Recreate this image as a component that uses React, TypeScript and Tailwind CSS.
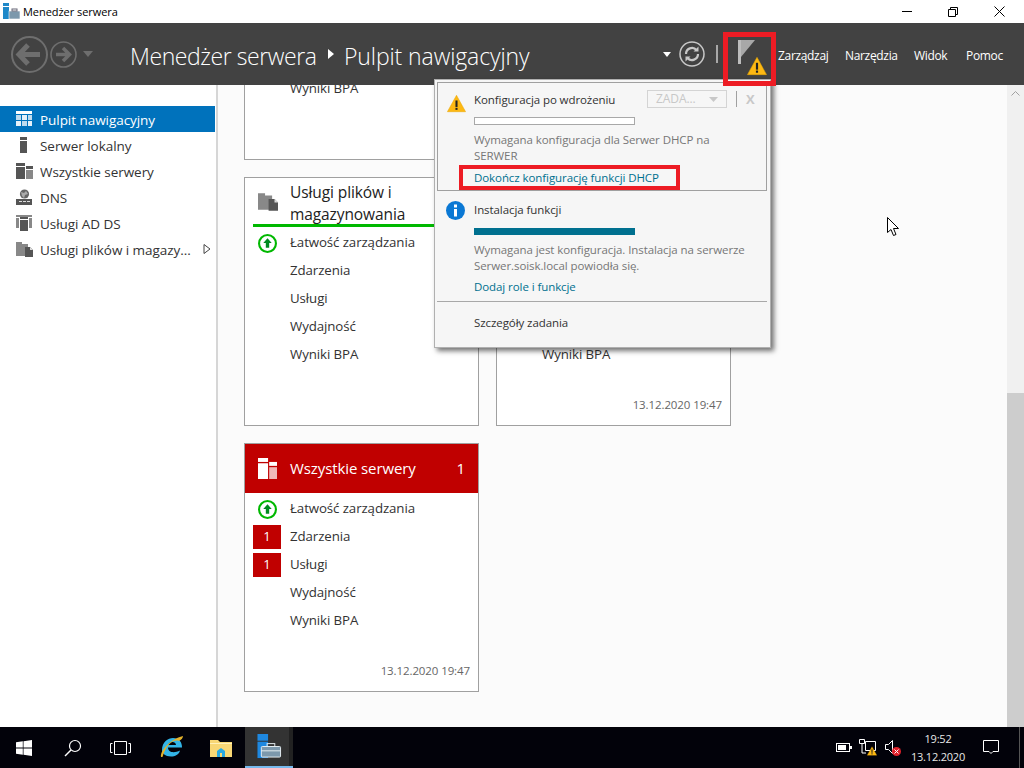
import React from "react";

const font = { fontFamily: '"Open Sans", "Noto Sans", sans-serif' };

function DashIcon({ c = "#fff" }: { c?: string }) {
  return (
    <svg width="17" height="16" viewBox="0 0 17 16">
      <rect x="0" y="0" width="16" height="3" fill={c} />
      <rect x="0" y="4" width="5" height="5" fill={c} opacity=".75" /><rect x="6" y="4" width="5" height="5" fill={c} opacity=".9" /><rect x="12" y="4" width="4" height="5" fill={c} opacity=".75" />
      <rect x="0" y="10" width="5" height="5" fill={c} opacity=".9" /><rect x="6" y="10" width="5" height="5" fill={c} opacity=".75" /><rect x="12" y="10" width="4" height="5" fill={c} opacity=".9" />
    </svg>
  );
}
function LocalIcon() {
  return (
    <svg width="17" height="17" viewBox="0 0 17 17">
      <rect x="4" y="0" width="7" height="3" fill="#555" /><rect x="4" y="4" width="7" height="12" fill="#555" />
    </svg>
  );
}
function AllIcon({ a = "#555", b = "#888", w = 17, h = 16 }: { a?: string; b?: string; w?: number; h?: number }) {
  return (
    <svg width={w} height={h} viewBox="0 0 17 16" preserveAspectRatio="none">
      <rect x="0" y="0" width="9" height="3" fill={a} /><rect x="0" y="4" width="9" height="12" fill={a} />
      <rect x="10" y="3" width="7" height="3" fill={a} /><rect x="10" y="7" width="7" height="9" fill={b} />
    </svg>
  );
}
function DnsIcon() {
  return (
    <svg width="17" height="16" viewBox="0 0 17 16">
      <circle cx="8.5" cy="5" r="4.6" fill="#666" /><path d="M5 3l3 1 2-2 2 3-3 1-1 3-2-2z" fill="#aaa" />
      <rect x="0" y="10" width="16" height="6" fill="#555" /><rect x="3" y="12" width="3" height="1" fill="#ddd" /><rect x="7" y="12" width="3" height="1" fill="#ddd" /><rect x="11" y="12" width="3" height="1" fill="#ddd" />
    </svg>
  );
}
function AdIcon() {
  return (
    <svg width="17" height="17" viewBox="0 0 17 17">
      <rect x="0" y="0" width="16" height="2" fill="#888" /><rect x="0" y="3" width="3" height="10" fill="#888" /><rect x="13" y="3" width="3" height="10" fill="#888" />
      <rect x="4" y="2" width="8" height="2" fill="#555" /><rect x="4" y="5" width="8" height="11" fill="#555" />
    </svg>
  );
}
function FilesIcon({ big }: { big?: boolean }) {
  return (
    <svg width={big ? 20 : 17} height={big ? 20 : 17} viewBox="0 0 17 17">
      <path d="M0 1h6v2h6v3h-2v9H0z" fill="#888" /><path d="M9 6h5l3 3v7H9z" fill="#555" /><path d="M14 6l3 3h-3z" fill="#ddd" />
    </svg>
  );
}
function GreenUp() {
  return (
    <svg width="19" height="19" viewBox="0 0 18 18">
      <circle cx="9" cy="9" r="8" fill="#fff" stroke="#00b800" strokeWidth="2" />
      <path d="M9 4l4 4.5h-2.4V13H7.4V8.5H5z" fill="#008a20" />
    </svg>
  );
}
function Warn({ size = 22 }: { size?: number }) {
  return (
    <svg width={size} height={size} viewBox="0 0 22 22">
      <path d="M11 1.5L21.5 20.5H.5z" fill="#fdb813" stroke="#e9a800" strokeWidth=".6" />
      <rect x="9.8" y="7.5" width="2.4" height="7.5" fill="#222" /><rect x="9.8" y="16" width="2.4" height="2.4" fill="#222" />
    </svg>
  );
}

function SideItem({ icon, label, active, arrow }: { icon: React.ReactNode; label: string; active?: boolean; arrow?: boolean }) {
  return (
    <div className={`flex h-[26px] items-center pl-4 text-[13.5px] tracking-[-0.05px] ${active ? "bg-[#0072bc] text-white" : "text-[#333333]"}`}>
      <span className="flex w-6 shrink-0 items-center">{icon}</span>
      <span className="flex-1 truncate pt-[3px]">{label}</span>
      {arrow && (
        <svg width="8" height="10" viewBox="0 0 8 10" className="mr-[4px]"><path d="M1 .5L7 5 1 9.500z" fill="#fff" stroke="#444" /></svg>
      )}
    </div>
  );
}

function Row({ label, badge, up }: { label: string; badge?: string; up?: boolean }) {
  return (
    <div className="flex h-[28px] items-center text-[13.3px] tracking-[-0.1px] text-[#333333]">
      <span className="ml-[8px] flex h-6 w-[28px] shrink-0 items-center justify-center">
        {up && <GreenUp />}
        {badge && <span className="flex h-6 w-[28px] items-center justify-center bg-[#c00000] text-[13px] text-white">{badge}</span>}
      </span>
      <span className="ml-[9px]">{label}</span>
    </div>
  );
}

function Rows({ first = false }: { first?: boolean }) {
  return (
    <>
      <Row label="Łatwość zarządzania" up />
      <Row label="Zdarzenia" badge={first ? "1" : undefined} />
      <Row label="Usługi" badge={first ? "1" : undefined} />
      <Row label="Wydajność" />
      <Row label="Wyniki BPA" />
    </>
  );
}

function Card({ children, date }: { children?: React.ReactNode; date?: boolean }) {
  return (
    <div className="relative flex h-[249px] flex-col border border-[#a0a0a0] bg-white">
      {children}
      {date && <div className="mt-auto pb-[12px] pr-[8px] text-right text-[11.5px] tracking-[-0.1px] text-[#666666]">13.12.2020 19:47</div>}
    </div>
  );
}

export default function App() {
  return (
    <div className="relative flex h-[768px] w-[1024px] flex-col overflow-hidden bg-white" style={font}>
      {/* title bar */}
      <div className="flex h-[23px] shrink-0 items-center bg-white">
        <svg width="17" height="17" viewBox="0 0 17 17" className="ml-[3px]">
          <rect x="0" y="0" width="6" height="3" fill="#1e88c8" /><rect x="0" y="4" width="6" height="12" fill="#1e88c8" />
          <rect x="6" y="8" width="11" height="8" fill="#7c98ac" stroke="#fff" strokeWidth=".6" /><rect x="9" y="6" width="5" height="2" fill="none" stroke="#667" />
        </svg>
        <span className="ml-[3px] mt-[2px] text-[11px] tracking-[-0.05px] text-black">Menedżer serwera</span>
        <div className="ml-auto mr-[2px] flex">
          <div className="flex h-[23px] w-[46px] items-center justify-center"><div className="h-px w-[10px] bg-black" /></div>
          <div className="flex h-[23px] w-[46px] items-center justify-center">
            <svg width="10" height="10" viewBox="0 0 10 10"><path d="M.5 2.500h7v7h-7zM2.500 2.500v-2h7v7h-2" fill="none" stroke="#000" /></svg>
          </div>
          <div className="flex h-[23px] w-[46px] items-center justify-center">
            <svg width="11" height="11" viewBox="0 0 11 11"><path d="M.5.500l10 10M10.500.500l-10 10" stroke="#000" /></svg>
          </div>
        </div>
      </div>

      {/* header */}
      <div className="flex h-[62px] shrink-0 items-center bg-[#424242]">
        <svg width="37" height="37" viewBox="0 0 37 37" className="ml-[11px]">
          <circle cx="18.500" cy="18.500" r="17.500" fill="none" stroke="#6e6e6e" strokeWidth="2" />
          <path d="M8 18.500h21M17 9l-9 9.500 9 9.500" fill="none" stroke="#6e6e6e" strokeWidth="5" />
        </svg>
        <svg width="27" height="27" viewBox="0 0 27 27" className="ml-[2px]">
          <circle cx="13.500" cy="13.500" r="12.500" fill="none" stroke="#6e6e6e" strokeWidth="1.600" />
          <path d="M20 13.500H6M13 7l6.500 6.500L13 20" fill="none" stroke="#6e6e6e" strokeWidth="3.500" />
        </svg>
        <svg width="10" height="6" viewBox="0 0 10 6" className="ml-[6px]"><path d="M0 0h10L5 6z" fill="#6e6e6e" /></svg>
        <span className="ml-[37px] mt-[4px] w-[187px] whitespace-nowrap text-[23px] font-light tracking-[-0.42px] text-white">Menedżer serwera</span>
        <svg width="7" height="10" viewBox="0 0 7 10" className="ml-[11px]"><path d="M0 0l6 5-6 5z" fill="#fff" /></svg>
        <span className="ml-[9px] mt-[4px] whitespace-nowrap text-[23px] font-light tracking-[-0.1px] text-white">Pulpit nawigacyjny</span>
        <svg width="8" height="5" viewBox="0 0 8 5" className="ml-auto"><path d="M0 0h8L4 5z" fill="#fff" /></svg>
        <svg width="26" height="26" viewBox="0 0 26 26" className="ml-[8px]">
          <circle cx="13" cy="13" r="12" fill="none" stroke="#c8c8c8" strokeWidth="1.500" />
          <path d="M7 13a6 6 0 0 1 10.500-4M19 13a6 6 0 0 1-10.500 4" fill="none" stroke="#c8c8c8" strokeWidth="2.200" />
          <path d="M19.500 5.500v5h-5zM6.500 20.500v-5h5z" fill="#c8c8c8" />
        </svg>
        <div className="ml-[11px] h-[18px] w-[2px] bg-[#a8a8a8]" />
        <div className="relative ml-[5px] flex h-[53px] w-[53px] shrink-0 self-end" />
        <div className="ml-[2px] flex w-[246px] shrink-0 items-center pt-[4px] text-[12px] tracking-[-0.33px] text-white">
          <span className="w-[67px]">Zarządzaj</span>
          <span className="w-[69px]">Narzędzia</span>
          <span className="w-[52px]">Widok</span>
          <span>Pomoc</span>
        </div>
      </div>

      {/* body */}
      <div className="flex min-h-0 flex-1 overflow-hidden bg-[#fbfbfb]">
        <div className="w-[216px] shrink-0 bg-white pr-px pt-[21px]">
          <SideItem icon={<DashIcon />} label="Pulpit nawigacyjny" active />
          <SideItem icon={<LocalIcon />} label="Serwer lokalny" />
          <SideItem icon={<AllIcon />} label="Wszystkie serwery" />
          <SideItem icon={<DnsIcon />} label="DNS" />
          <SideItem icon={<AdIcon />} label="Usługi AD DS" />
          <SideItem icon={<FilesIcon />} label="Usługi plików i magazy..." arrow />
        </div>
        <div className="w-[2px] shrink-0 bg-[#d6d6d6]" />
        <div className="min-w-0 flex-1 overflow-hidden pl-[26px]">
          <div className="-mt-[174px] grid w-[487px] grid-cols-[235px_235px] gap-x-[17px] gap-y-[17px]">
            <Card>
              <div className="h-[51px]" />
              <Rows />
            </Card>
            <Card />
            <Card>
              <div className="relative flex h-[51px] shrink-0 items-start pl-[13px] pt-[3px]">
                <span className="mt-[11px] flex w-[32px]"><FilesIcon big /></span>
                <span className="text-[15.5px] leading-[22px] tracking-[-0.1px] text-[#222222]">Usługi plików i<br />magazynowania</span>
                <div className="absolute bottom-[2px] left-[8px] right-[8px] h-[3px] bg-[#00b800]" />
              </div>
              <Rows />
            </Card>
            <Card date>
              <div className="h-[51px]" />
              <Rows />
            </Card>
            <Card date>
              <div className="flex h-[49px] shrink-0 items-center bg-[#c00000] pl-[13px] pr-[13px] text-white">
                <span className="flex w-[32px]"><AllIcon a="#ffffff" b="#f0b8b8" w={19} h={21} /></span>
                <span className="flex-1 text-[15px] tracking-[-0.1px]">Wszystkie serwery</span>
                <span className="text-[15px]">1</span>
              </div>
              <div className="h-[2px]" />
              <Rows first />
            </Card>
          </div>
        </div>
        {/* scrollbar */}
        <div className="flex w-[17px] shrink-0 flex-col bg-[#f0f0f0]">
          <div className="flex h-[17px] items-center justify-center">
            <svg width="9" height="5" viewBox="0 0 9 5"><path d="M.5 4.500l4-4 4 4" fill="none" stroke="#a0a0a0" /></svg>
          </div>
          <div className="h-[291px]" />
          <div className="flex-1 bg-[#cdcdcd]" />
        </div>
      </div>

      {/* taskbar */}
      <div className="flex h-[41px] shrink-0 items-center bg-[#02020a] text-white">
        <svg width="16" height="16" viewBox="0 0 16 16" className="ml-[16px]"><path d="M0 2.300l6.800-1v6.300H0zM7.500 1.200L16 0v7.600H7.500zM0 8.400h6.800v6.300L0 13.700zM7.500 8.400H16V16l-8.500-1.200z" fill="#fff" /></svg>
        <svg width="18" height="18" viewBox="0 0 18 18" className="ml-[32px]"><circle cx="11" cy="7" r="5.500" fill="none" stroke="#fff" strokeWidth="1.200" /><path d="M7 11l-6 6" stroke="#fff" strokeWidth="1.400" /></svg>
        <svg width="21" height="14" viewBox="0 0 21 14" className="ml-[28px]"><path d="M4.500.500h12v13h-12z" fill="none" stroke="#fff" /><path d="M2.500 2.500H.5v9h2M18.500 2.500h2v9h-2" fill="none" stroke="#fff" /></svg>
        <svg width="24" height="26" viewBox="0 0 24 26" className="ml-[29px]">
          <path d="M2 15C2 7 8 3 13 3c6 0 9 4 9 9.500H8c0 5 6 6 12 3-1 4-5 6-9 6-6 0-9-3-9-6.500z" fill="#33b5e8" /><path d="M8 10h8c0-4-7-4-8 0z" fill="#02020a" />
          <path d="M1 22C0 16 10 4 23 1c0 2-2 4-4 5C13 4 6 10 2.500 22z" fill="#e3b22c" />
        </svg>
        <svg width="22" height="18" viewBox="0 0 22 18" className="ml-[26px]"><path d="M0 1h8l2 2h12v15H0z" fill="#f8d775" /><rect x="0" y="4" width="22" height="1" fill="#fff1b8" /><path d="M7 18v-6l4-3 4 3v6z" fill="#29a8e0" /><rect x="10" y="14" width="2" height="4" fill="#f8d775" /></svg>
        <div className="ml-[13px] flex h-[41px] w-[48px] border-b-[2px] border-[#76b9ed] bg-[#333333]">
          <div className="flex flex-1 items-center pl-[12px]">
            <svg width="25" height="25" viewBox="0 0 25 26">
              <rect x="0" y="0" width="11" height="7" fill="#1e88e0" /><rect x="0" y="8" width="11" height="17" fill="#1e88e0" />
              <rect x="4" y="13" width="20" height="11" rx="1" fill="#7c98ac" stroke="#e6eef2" strokeWidth="1" /><rect x="10" y="10" width="8" height="3" fill="none" stroke="#e6eef2" />
              <rect x="4" y="17" width="20" height="1" fill="#e6eef2" />
            </svg>
          </div>
          <div className="w-[4px] bg-[#222222]" />
        </div>
        <div className="ml-auto flex items-center">
          <svg width="16" height="9" viewBox="0 0 16 9"><rect x=".5" y=".5" width="13" height="8" fill="none" stroke="#fff" /><rect x="2" y="2" width="8" height="5" fill="#fff" /><rect x="14" y="3" width="2" height="3" fill="#fff" /></svg>
          <div className="relative ml-[7px] h-[17px] w-[18px]">
            <svg width="18" height="17" viewBox="0 0 18 17"><path d="M.5.500h5v4h-5zM6.500 2.500h10v9h-10zM3 5v9h4" fill="none" stroke="#fff" /></svg>
            <span className="absolute left-[8px] top-[7px]"><Warn size={10} /></span>
          </div>
          <div className="relative ml-[8px] h-[18px] w-[20px]">
            <svg width="10" height="14" viewBox="0 0 10 14" className="mt-px"><path d="M.5 4.500h3l4-4v13l-4-4h-3z" fill="none" stroke="#fff" /></svg>
            <span className="absolute left-[7px] top-[8px] flex h-[9px] w-[9px] items-center justify-center rounded-full bg-[#e0202a]">
              <svg width="5" height="5" viewBox="0 0 5 5"><path d="M.5.500l4 4M4.500.500l-4 4" stroke="#fff" strokeWidth="1" /></svg>
            </span>
          </div>
          <div className="ml-[3px] w-[60px] whitespace-nowrap text-center text-[11px] leading-[18px] tracking-[-0.2px] text-[#e8e8e8]">
            <div>19:52</div>
            <div>13.12.2020</div>
          </div>
          <svg width="16" height="15" viewBox="0 0 16 15" className="ml-[15px] mr-[20px]"><path d="M.5.500h15v11h-5.500l-2 2-2-2H.5z" fill="none" stroke="#fff" /></svg>
          <div className="mr-[4px] h-[41px] w-px bg-[#555555]" />
        </div>
      </div>

      {/* notifications popup */}
      <div className="absolute left-[434px] top-[79px] flex h-[269px] w-[337px] flex-col border border-[#b0b0b0] bg-[#f6f6f6] pl-[2px] pr-[3px] pt-[2px] text-[11.5px] tracking-[-0.08px] shadow-[3px_3px_5px_rgba(0,0,0,0.55)]">
        <div className="flex h-[109px] shrink-0 border border-[#a0a0a0]">
          <div className="ml-[9px] mt-[11px] w-[27px]"><Warn size={19} /></div>
          <div className="flex-1 pt-[8px]">
            <div className="flex items-start">
              <span className="flex-1 text-[#333333]">Konfiguracja po wdrożeniu</span>
              <div className="-mt-[1px] flex h-[18px] w-[80px] items-center justify-between border border-[#d4d4d4] px-[8px] text-[12px] text-[#c8c8c8]">
                <span>ZADA...</span>
                <svg width="9" height="5" viewBox="0 0 9 5"><path d="M0 0h9L4.500 5z" fill="#c8c8c8" /></svg>
              </div>
              <div className="ml-[9px] h-[16px] w-px bg-[#a0a0a0]" />
              <span className="ml-[9px] mr-[12px] w-[8px] text-[13px] leading-[16px] font-bold text-[#c8c8c8]">X</span>
            </div>
            <div className="mt-[9px] h-[8px] w-[161px] border border-[#a8a8a8] bg-white" />
            <div className="mt-[7px] w-[255px] leading-[16px] text-[#777777]">Wymagana konfiguracja dla Serwer DHCP na SERWER</div>
            <div className="mt-[5px] text-[#00708f]">Dokończ konfigurację funkcji DHCP</div>
          </div>
        </div>
        <div className="flex h-[110px] shrink-0">
          <div className="ml-[9px] mt-[10px] w-[28px]">
            <svg width="19" height="19" viewBox="0 0 19 19"><circle cx="9.500" cy="9.500" r="9.500" fill="#0a78d4" /><rect x="8" y="8" width="3" height="7.500" fill="#fff" /><rect x="8" y="3.500" width="3" height="3" fill="#fff" /></svg>
          </div>
          <div className="flex-1 pt-[10px]">
            <div className="text-[#333333]">Instalacja funkcji</div>
            <div className="mt-[10px] h-[7px] w-[161px] bg-[#00708f]" />
            <div className="mt-[7px] leading-[16px] text-[#777777]">Wymagana jest konfiguracja. Instalacja na serwerze<br />Serwer.soisk.local powiodła się.</div>
            <div className="mt-[4px] text-[#00708f]">Dodaj role i funkcje</div>
          </div>
        </div>
        <div className="h-px shrink-0 bg-[#a8a8a8]" />
        <div className="pl-[37px] pt-[12px] text-[#333333]">Szczegóły zadania</div>
      </div>

      {/* annotations */}
      <div className="absolute left-[723px] top-[32px] h-[54px] w-[53px] border-[5px] border-[#ed1c24]">
        <svg width="17" height="24" viewBox="0 0 17 24" className="absolute left-[10px] top-[3px]">
          <rect x="0" y="0" width="3" height="24" fill="#bdbdbd" /><path d="M3 0h14L3 17z" fill="#a8a8a8" />
        </svg>
        <span className="absolute left-[19px] top-[19px]"><Warn size={20} /></span>
      </div>
      <div className="absolute left-[459px] top-[165px] h-[25px] w-[221px] border-[4px] border-[#ed1c24]" />

      {/* mouse pointer */}
      <svg width="13" height="20" viewBox="0 0 13 20" className="absolute left-[887px] top-[217px]">
        <path d="M.5.500v15l3.500-3 2.500 6 2.500-1-2.500-6h5z" fill="#fff" stroke="#000" />
      </svg>
    </div>
  );
}
